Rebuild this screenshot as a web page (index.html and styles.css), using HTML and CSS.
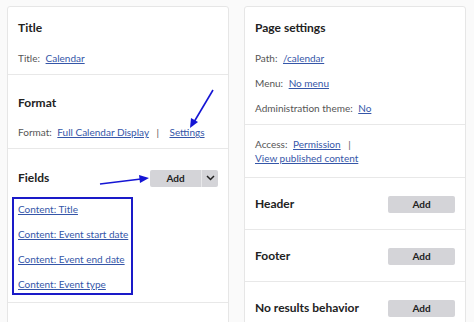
FILE: index.html
```html
<!DOCTYPE html>
<html lang="en">
<head>
    <meta charset="UTF-8">
    <title>Calendar view</title>
    <link rel="stylesheet" href="styles.css">
</head>
<body>
    <div class="columns">
        <div class="panel">
            <div class="section first">
                <h2>Title</h2>
                <p class="line">Title: <a href="#">Calendar</a></p>
            </div>
            <div class="section">
                <h2>Format</h2>
                <p class="line">Format: <a href="#">Full Calendar Display</a> <span class="sep">|</span> <a href="#" class="settings">Settings</a></p>
                <svg class="arrow arrow-settings" width="30" height="42" viewBox="0 0 30 42">
                    <line x1="26" y1="2" x2="7" y2="34" stroke="#1515d4" stroke-width="1.6"/>
                    <polygon points="3,40 4,30 11,34" fill="#1515d4"/>
                </svg>
            </div>
            <div class="section fields">
                <div class="row">
                    <h2>Fields</h2>
                    <div class="split">
                        <button class="btn">Add</button>
                        <button class="toggle">
                            <svg width="9" height="6" viewBox="0 0 9 6"><polyline points="1,1 4.5,4.5 8,1" fill="none" stroke="#222" stroke-width="1.5"/></svg>
                        </button>
                    </div>
                </div>
                <svg class="arrow arrow-fields" width="52" height="12" viewBox="0 0 52 12">
                    <line x1="1" y1="9" x2="42" y2="4" stroke="#1515d4" stroke-width="1.6"/>
                    <polygon points="50,3 40,0 41,8" fill="#1515d4"/>
                </svg>
                <ul class="field-list">
                    <li><a href="#">Content: Title</a></li>
                    <li><a href="#">Content: Event start date</a></li>
                    <li><a href="#">Content: Event end date</a></li>
                    <li><a href="#">Content: Event type</a></li>
                </ul>
            </div>
            <div class="section"></div>
        </div>

        <div class="panel">
            <div class="section first">
                <h2>Page settings</h2>
                <p class="line">Path: <a href="#">/calendar</a></p>
                <p class="line">Menu: <a href="#">No menu</a></p>
                <p class="line">Administration theme: <a href="#">No</a></p>
            </div>
            <div class="section access">
                <p>Access: <a href="#">Permission</a> <span class="sep">|</span><br><a href="#" class="flush">View published content</a></p>
            </div>
            <div class="section slot">
                <div class="row">
                    <h2>Header</h2>
                    <button class="btn wide">Add</button>
                </div>
            </div>
            <div class="section slot">
                <div class="row">
                    <h2>Footer</h2>
                    <button class="btn wide">Add</button>
                </div>
            </div>
            <div class="section slot">
                <div class="row">
                    <h2>No results behavior</h2>
                    <button class="btn wide">Add</button>
                </div>
            </div>
        </div>
    </div>
</body>
</html>
```

FILE: styles.css
```css
body {
    margin: 0;
    padding: 6px 8px 0 7px;
    background-color: #fafafa;
    font-family: Lato, "Noto Sans", Arial, sans-serif;
    font-size: 10px;
    color: #555;
    height: 316px;
    overflow: hidden;
}

.columns {
    display: grid;
    grid-template-columns: 222px 222px;
    gap: 15px;
}

.panel {
    background-color: #fff;
    border: 1px solid #e6e6e6;
    border-radius: 3px;
    height: 340px;
}

.section {
    position: relative;
    padding: 19px 10px 8px;
    border-bottom: 1px solid #e8e8e8;
}

.section.first {
    padding-top: 12px;
}

h2 {
    margin: 0;
    font-size: 12px;
    line-height: 18px;
    font-weight: bold;
    color: #222;
}

p {
    margin: 0;
}

.line {
    line-height: 16px;
    margin-top: 12px;
    white-space: nowrap;
}

.first .line:first-of-type {
    margin-top: 13px;
}

.line + .line {
    margin-top: 9px;
}

a {
    color: #3556a8;
    text-decoration: underline;
    margin-left: 3px;
}

a.flush {
    margin-left: 0;
}

.sep {
    margin: 0 5px;
}

.row {
    display: flex;
    justify-content: space-between;
    align-items: center;
}

.btn {
    font-family: inherit;
    font-size: 10px;
    font-weight: bold;
    color: #222;
    background-color: #d4d4d8;
    border: none;
    border-radius: 2px;
    height: 17px;
    padding: 0;
}

.split {
    display: flex;
}

.split .btn {
    width: 51px;
    border-radius: 2px 0 0 2px;
}

.toggle {
    width: 17px;
    height: 17px;
    padding: 0;
    border: none;
    border-left: 1px solid #e8e8ea;
    background-color: #d4d4d8;
    border-radius: 0 2px 2px 0;
    display: flex;
    align-items: center;
    justify-content: center;
}

.btn.wide {
    width: 67px;
}

.fields {
    padding-top: 20px;
    padding-bottom: 7px;
}

.field-list {
    list-style: none;
    margin: 10px 0 0 -6px;
    padding: 0 4px;
    width: 109px;
    border: 2px solid #1a1ac8;
    white-space: nowrap;
}

.field-list li {
    line-height: 16px;
    margin: 0 0 9px;
}

.field-list li:first-child {
    margin-top: 2px;
}

.field-list li:last-child {
    margin-bottom: 1px;
}

.field-list a {
    margin-left: 0;
}

.access {
    padding-top: 12px;
    padding-bottom: 12px;
}

.access p {
    line-height: 14px;
}

.slot {
    padding-top: 17px;
    padding-bottom: 16px;
}

.arrow {
    position: absolute;
}

.arrow-settings {
    left: 179px;
    top: 13px;
}

.arrow-fields {
    left: 91px;
    top: 26px;
}
```
